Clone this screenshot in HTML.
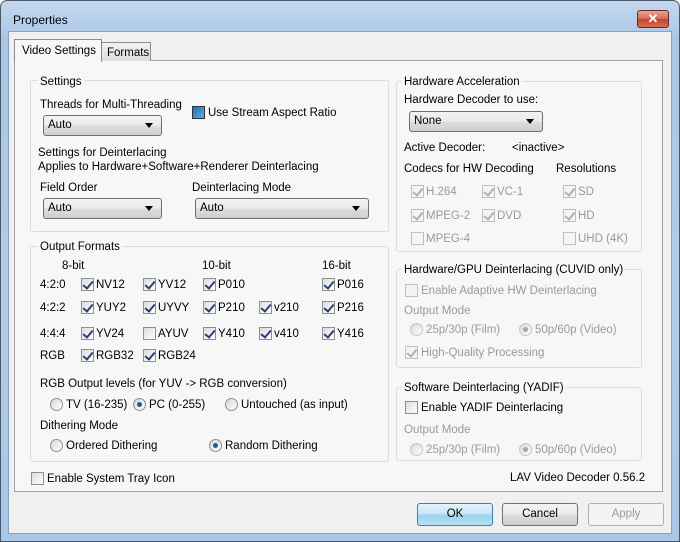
<!DOCTYPE html>
<html><head><meta charset="utf-8"><style>
*{margin:0;padding:0;box-sizing:border-box}
body{width:680px;height:542px;overflow:hidden;background:#fff;font-family:"Liberation Sans",sans-serif;font-size:11.5px;color:#000;position:relative}
.frame{position:absolute;left:0;top:0;width:680px;height:542px;border:1px solid #4a5a6c;border-radius:7px 7px 0 0;background:linear-gradient(#c4d8ee,#a9c6e6 40px,#b3cde9 300px,#a8c6e8)}
.client{position:absolute;left:8px;top:31px;width:664px;height:503px;background:#f0f0f0;border:1px solid #8aa0bc}
.t{position:absolute;white-space:nowrap;line-height:14px;transform:translateY(1px)}
.g{color:#9a9a9a}
.grp{position:absolute;border:1px solid #d8dde2;border-radius:3px}
.lbl{position:absolute;background:#f7f7f7;padding:0 2px;line-height:14px;white-space:nowrap;transform:translateY(1px)}
.cb{position:absolute;width:13px;height:13px;border:1px solid #8e8f8f;background:linear-gradient(135deg,#dcdcdc,#fff);transform:translateY(1px)}
.cb.on::after{content:"";position:absolute;left:3px;top:0px;width:4px;height:8px;border:solid #2a3f7a;border-width:0 2px 2px 0;transform:rotate(40deg)}
.cb.dis{border-color:#c0c0c0;background:#f4f4f4}
.cb.dis.on::after{border-color:#b0b0b0}
.rb{position:absolute;width:13px;height:13px;border:1px solid #8e8f8f;border-radius:50%;background:linear-gradient(135deg,#d8d8d8,#fff);transform:translateY(1px)}
.rb.on::after{content:"";position:absolute;left:3px;top:3px;width:5px;height:5px;border-radius:50%;background:#1e5a9c}
.rb.dis{border-color:#c4c4c4}
.rb.dis.on::after{background:#aaa}
.combo{position:absolute;height:21px;border:1px solid #707070;border-radius:3px;background:linear-gradient(#f2f2f2,#ebebeb 50%,#dddddd 51%,#cfcfcf);padding-left:4px;line-height:19px}
.combo::after{content:"";position:absolute;right:8px;top:7px;border-left:4px solid transparent;border-right:4px solid transparent;border-top:5px solid #000}
.btn{position:absolute;height:23px;border:1px solid #707070;border-radius:3px;background:linear-gradient(#f2f2f2,#ebebeb 50%,#dddddd 51%,#cfcfcf);text-align:center;line-height:21px}
</style></head><body>
<div class="frame"></div>
<div class="t" style="left:13px;top:12px;font-size:12px">Properties</div>
<div style="position:absolute;left:637px;top:10px;width:32px;height:18px;border:1px solid #6b2b20;border-radius:3px;background:linear-gradient(#e8a497,#d26a55 50%,#c2432c 51%,#d46d4f);color:#fff;font-weight:bold;text-align:center;line-height:16px;font-size:13px">✕</div>
<div class="client"></div>
<div style="position:absolute;left:14px;top:60px;width:649px;height:432px;border:1px solid #a0a4ab;background:#f7f7f7"></div>
<div style="position:absolute;left:14px;top:39px;width:88px;height:23px;border:1px solid #898c95;border-bottom:none;background:#f7f7f7"></div>
<div class="t" style="left:22px;top:43px">Video Settings</div>
<div style="position:absolute;left:101px;top:42px;width:50px;height:19px;border:1px solid #898c95;border-bottom:none;background:linear-gradient(#f2f2f2,#dcdcdc)"></div>
<div class="t" style="left:107px;top:45px">Formats</div>

<div class="grp" style="left:30px;top:80px;width:359px;height:152px"></div>
<div class="lbl" style="left:38px;top:74px">Settings</div>
<div class="t" style="left:40px;top:97px">Threads for Multi-Threading</div>
<div class="combo" style="left:43px;top:115px;width:119px">Auto</div>
<div class="cb" style="left:192px;top:105px;background:linear-gradient(135deg,#1a6fb0,#5ab0e0);border-color:#333"></div>
<div class="t" style="left:208px;top:105px">Use Stream Aspect Ratio</div>
<div class="t" style="left:38px;top:145px">Settings for Deinterlacing</div>
<div class="t" style="left:38px;top:159px">Applies to Hardware+Software+Renderer Deinterlacing</div>
<div class="t" style="left:40px;top:180px">Field Order</div>
<div class="t" style="left:192px;top:180px">Deinterlacing Mode</div>
<div class="combo" style="left:43px;top:198px;width:119px">Auto</div>
<div class="combo" style="left:195px;top:198px;width:174px">Auto</div>

<div class="grp" style="left:30px;top:246px;width:359px;height:216px"></div>
<div class="lbl" style="left:38px;top:239px">Output Formats</div>
<div class="t" style="left:62px;top:258px">8-bit</div>
<div class="t" style="left:202px;top:258px">10-bit</div>
<div class="t" style="left:322px;top:258px">16-bit</div>
<div class="t" style="left:40px;top:277px">4:2:0</div>
<div class="t" style="left:40px;top:300px">4:2:2</div>
<div class="t" style="left:40px;top:326px">4:4:4</div>
<div class="t" style="left:40px;top:348px">RGB</div>
<div class="cb on" style="left:81px;top:277px"></div><div class="t" style="left:96px;top:277px">NV12</div>
<div class="cb on" style="left:143px;top:277px"></div><div class="t" style="left:158px;top:277px">YV12</div>
<div class="cb on" style="left:203px;top:277px"></div><div class="t" style="left:218px;top:277px">P010</div>
<div class="cb on" style="left:322px;top:277px"></div><div class="t" style="left:337px;top:277px">P016</div>
<div class="cb on" style="left:81px;top:300px"></div><div class="t" style="left:96px;top:300px">YUY2</div>
<div class="cb on" style="left:143px;top:300px"></div><div class="t" style="left:158px;top:300px">UYVY</div>
<div class="cb on" style="left:203px;top:300px"></div><div class="t" style="left:218px;top:300px">P210</div>
<div class="cb on" style="left:259px;top:300px"></div><div class="t" style="left:274px;top:300px">v210</div>
<div class="cb on" style="left:322px;top:300px"></div><div class="t" style="left:337px;top:300px">P216</div>
<div class="cb on" style="left:81px;top:326px"></div><div class="t" style="left:96px;top:326px">YV24</div>
<div class="cb" style="left:143px;top:326px"></div><div class="t" style="left:158px;top:326px">AYUV</div>
<div class="cb on" style="left:203px;top:326px"></div><div class="t" style="left:218px;top:326px">Y410</div>
<div class="cb on" style="left:259px;top:326px"></div><div class="t" style="left:274px;top:326px">v410</div>
<div class="cb on" style="left:322px;top:326px"></div><div class="t" style="left:337px;top:326px">Y416</div>
<div class="cb on" style="left:81px;top:348px"></div><div class="t" style="left:96px;top:348px">RGB32</div>
<div class="cb on" style="left:143px;top:348px"></div><div class="t" style="left:158px;top:348px">RGB24</div>
<div class="t" style="left:40px;top:376px">RGB Output levels (for YUV -&gt; RGB conversion)</div>
<div class="rb" style="left:50px;top:397px"></div><div class="t" style="left:66px;top:397px">TV (16-235)</div>
<div class="rb on" style="left:133px;top:397px"></div><div class="t" style="left:149px;top:397px">PC (0-255)</div>
<div class="rb" style="left:225px;top:397px"></div><div class="t" style="left:241px;top:397px">Untouched (as input)</div>
<div class="t" style="left:40px;top:418px">Dithering Mode</div>
<div class="rb" style="left:50px;top:438px"></div><div class="t" style="left:66px;top:438px">Ordered Dithering</div>
<div class="rb on" style="left:209px;top:438px"></div><div class="t" style="left:225px;top:438px">Random Dithering</div>

<div class="cb" style="left:31px;top:471px"></div><div class="t" style="left:47px;top:471px">Enable System Tray Icon</div>
<div class="t" style="left:510px;top:470px">LAV Video Decoder 0.56.2</div>

<div class="grp" style="left:396px;top:81px;width:246px;height:171px"></div>
<div class="lbl" style="left:402px;top:74px">Hardware Acceleration</div>
<div class="t" style="left:404px;top:92px">Hardware Decoder to use:</div>
<div class="combo" style="left:409px;top:111px;width:134px">None</div>
<div class="t" style="left:404px;top:140px">Active Decoder:</div>
<div class="t" style="left:512px;top:140px">&lt;inactive&gt;</div>
<div class="t" style="left:404px;top:161px">Codecs for HW Decoding</div>
<div class="t" style="left:556px;top:161px">Resolutions</div>
<div class="cb dis on" style="left:411px;top:184px"></div><div class="t g" style="left:426px;top:184px">H.264</div>
<div class="cb dis on" style="left:482px;top:184px"></div><div class="t g" style="left:497px;top:184px">VC-1</div>
<div class="cb dis on" style="left:563px;top:184px"></div><div class="t g" style="left:578px;top:184px">SD</div>
<div class="cb dis on" style="left:411px;top:208px"></div><div class="t g" style="left:426px;top:208px">MPEG-2</div>
<div class="cb dis on" style="left:482px;top:208px"></div><div class="t g" style="left:497px;top:208px">DVD</div>
<div class="cb dis on" style="left:563px;top:208px"></div><div class="t g" style="left:578px;top:208px">HD</div>
<div class="cb dis" style="left:411px;top:231px"></div><div class="t g" style="left:426px;top:231px">MPEG-4</div>
<div class="cb dis" style="left:563px;top:231px"></div><div class="t g" style="left:578px;top:231px">UHD (4K)</div>

<div class="grp" style="left:396px;top:269px;width:246px;height:99px"></div>
<div class="lbl" style="left:402px;top:262px">Hardware/GPU Deinterlacing (CUVID only)</div>
<div class="cb dis" style="left:405px;top:283px"></div><div class="t g" style="left:421px;top:283px">Enable Adaptive HW Deinterlacing</div>
<div class="t g" style="left:404px;top:303px">Output Mode</div>
<div class="rb dis" style="left:410px;top:322px"></div><div class="t g" style="left:426px;top:322px">25p/30p (Film)</div>
<div class="rb dis on" style="left:519px;top:322px"></div><div class="t g" style="left:535px;top:322px">50p/60p (Video)</div>
<div class="cb dis on" style="left:405px;top:345px"></div><div class="t g" style="left:421px;top:345px">High-Quality Processing</div>

<div class="grp" style="left:396px;top:387px;width:246px;height:74px"></div>
<div class="lbl" style="left:402px;top:380px">Software Deinterlacing (YADIF)</div>
<div class="cb" style="left:405px;top:400px"></div><div class="t" style="left:421px;top:400px">Enable YADIF Deinterlacing</div>
<div class="t g" style="left:404px;top:422px">Output Mode</div>
<div class="rb dis" style="left:410px;top:442px"></div><div class="t g" style="left:426px;top:442px">25p/30p (Film)</div>
<div class="rb dis on" style="left:519px;top:442px"></div><div class="t g" style="left:535px;top:442px">50p/60p (Video)</div>

<div class="btn" style="left:417px;top:503px;width:76px;border-color:#3c7fb1;background:linear-gradient(#e5f4fc,#c4e5f6 50%,#98d1ef 51%,#b6e0f4)">OK</div>
<div class="btn" style="left:502px;top:503px;width:76px">Cancel</div>
<div class="btn" style="left:588px;top:503px;width:76px;border-color:#adb2b5;background:#f4f4f4;color:#9a9a9a">Apply</div>
</body></html>
